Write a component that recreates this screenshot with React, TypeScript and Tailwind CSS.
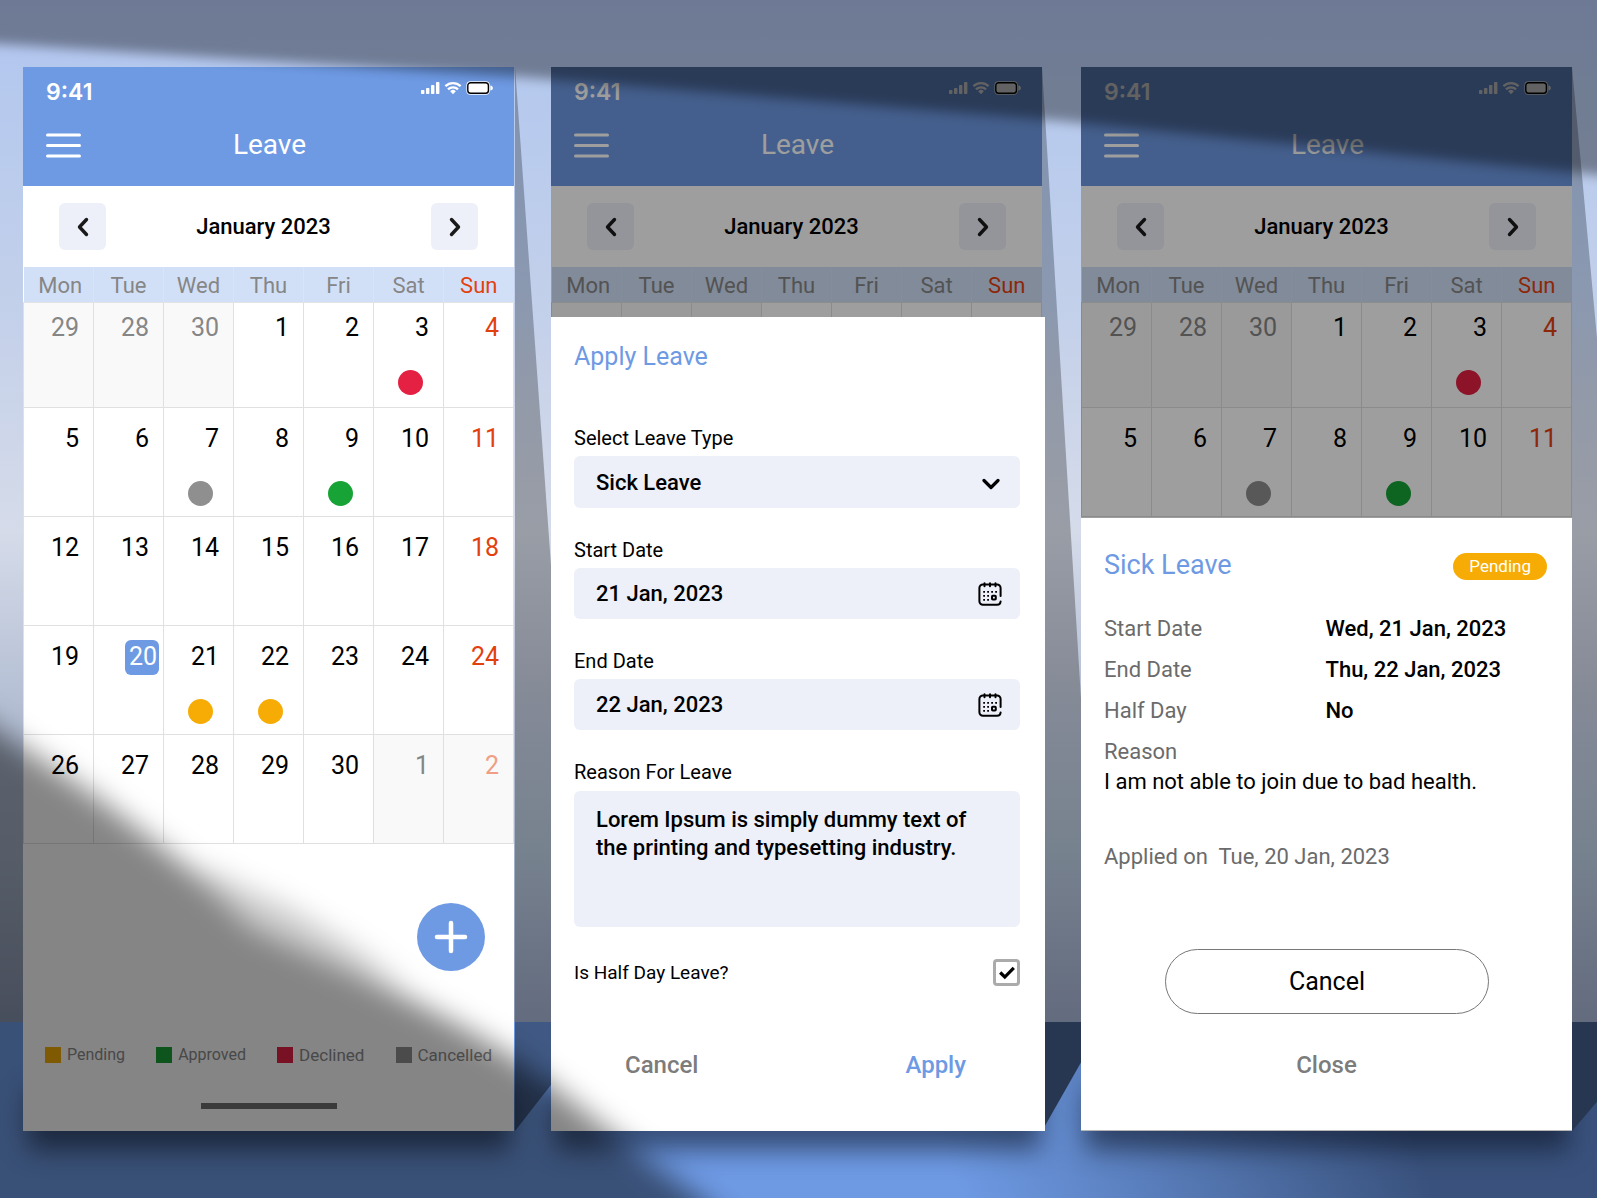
import React, { useState } from "react";

type Status = "pending" | "approved" | "declined" | "cancelled";
type Day = {
  n: number;
  tone?: "muted" | "sunday" | "sundayMuted" | "today";
  outside?: boolean;
  status?: Status;
};

const statusColor: Record<Status, string> = {
  pending: "bg-[#f6ac04]",
  approved: "bg-[#18a337]",
  declined: "bg-[#e42043]",
  cancelled: "bg-[#8f8f8f]",
};

const toneColor = {
  muted: "text-[#868686]",
  sunday: "text-[#e2410f]",
  sundayMuted: "text-[#ef9f86]",
  today: "text-white",
};

const weekdays = ["Mon", "Tue", "Wed", "Thu", "Fri", "Sat", "Sun"];

const weeks: Day[][] = [
  [
    { n: 29, tone: "muted", outside: true },
    { n: 28, tone: "muted", outside: true },
    { n: 30, tone: "muted", outside: true },
    { n: 1 },
    { n: 2 },
    { n: 3, status: "declined" },
    { n: 4, tone: "sunday" },
  ],
  [{ n: 5 }, { n: 6 }, { n: 7, status: "cancelled" }, { n: 8 }, { n: 9, status: "approved" }, { n: 10 }, { n: 11, tone: "sunday" }],
  [{ n: 12 }, { n: 13 }, { n: 14 }, { n: 15 }, { n: 16 }, { n: 17 }, { n: 18, tone: "sunday" }],
  [
    { n: 19 },
    { n: 20, tone: "today" },
    { n: 21, status: "pending" },
    { n: 22, status: "pending" },
    { n: 23 },
    { n: 24 },
    { n: 24, tone: "sunday" },
  ],
  [
    { n: 26 },
    { n: 27 },
    { n: 28 },
    { n: 29 },
    { n: 30 },
    { n: 1, tone: "muted", outside: true },
    { n: 2, tone: "sundayMuted", outside: true },
  ],
];

function StatusIcons() {
  return (
    <svg width="73" height="14" viewBox="0 0 73 14" fill="none" aria-hidden="true">
      <g fill="#fff">
        <rect x="0" y="9" width="3.4" height="4" rx="0.8" />
        <rect x="5" y="7" width="3.4" height="6" rx="0.8" />
        <rect x="10" y="4" width="3.4" height="9" rx="0.8" />
        <rect x="15" y="1" width="3.4" height="12" rx="0.8" />
        <path d="M32 13.2 29.2 10.2a4 4 0 0 1 5.6 0Z" />
      </g>
      <path d="M24.400 5.200a11 11 0 0 1 15.200 0M27 8.300a7.200 7.200 0 0 1 10 0" stroke="#fff" strokeWidth="2.300" />
      <rect x="45.400" y="0.300" width="23.400" height="13.400" rx="4" fill="#fff" />
      <rect x="46.800" y="1.700" width="20.600" height="10.600" rx="2.800" stroke="#000" strokeWidth="1.400" />
      <path d="M69.300 4.400c1.600.2 2.600 1.200 2.600 2.600s-1 2.400-2.600 2.600Z" fill="#fff" />
    </svg>
  );
}

function CalendarIcon() {
  return (
    <svg width="24" height="24" viewBox="0 0 24 24" fill="none" stroke="#000" strokeWidth="2" strokeLinecap="round" aria-hidden="true">
      <path d="M22.600 14V6a3.500 3.500 0 0 0-3.500-3.500H4.900A3.500 3.500 0 0 0 1.400 6v13.300a3.500 3.500 0 0 0 3.500 3.500h14.200a3.500 3.500 0 0 0 3.500-3.300" />
      <path d="M6.500 1.200v3M12 1.200v3M17.500 1.200v3" />
      <g fill="#000" stroke="none">
        <path d="M5.200 9h1.800v1.800H5.200zM9.200 9h1.800v1.800H9.200zM13.200 9h1.800v1.800h-1.800zM17.200 9h1.800v1.800h-1.800zM5.200 13h1.800v1.800H5.200zM9.200 13h1.800v1.800H9.200zM5.200 17h1.800v1.800H5.200zM9.200 17h1.800v1.800H9.200z" />
      </g>
      <rect x="14" y="13.800" width="3.800" height="3.800" rx="0.800" />
    </svg>
  );
}

function Chevron({ d }: { d: string }) {
  return (
    <svg width="24" height="24" viewBox="0 0 24 24" fill="none" stroke="#1a1a1a" strokeWidth="3.400" strokeLinecap="round" strokeLinejoin="round" aria-hidden="true">
      <path d={d} />
    </svg>
  );
}

function Screen({ rows, children }: { rows: number; children?: React.ReactNode }) {
  return (
    <div className="flex min-h-full flex-col bg-white">
      <header className="bg-[#6e9ae4] px-[23px] pt-[11px] pb-[22px] text-white">
        <div className="flex items-start justify-between">
          <span className="font-[Inter,sans-serif] text-[23px] leading-7 font-semibold">9:41</span>
          <span className="-mr-[3px] mt-[3px] block">
            <StatusIcons />
          </span>
        </div>
        <div className="mt-5 grid grid-cols-[1fr_auto_1fr] items-center">
          <button type="button" aria-label="Menu" className="justify-self-start">
            <svg width="35" height="25" viewBox="0 0 35 25" stroke="#fff" strokeWidth="3" strokeLinecap="round" aria-hidden="true">
              <path d="M1.500 2h32M1.500 12.500h32M1.500 23h32" />
            </svg>
          </button>
          <h1 className="pl-0.5 text-[28px] leading-[38px]">Leave</h1>
        </div>
      </header>

      <div className="flex h-[81px] items-center justify-between px-9">
        <button type="button" aria-label="Previous month" className="flex h-[47px] w-[47px] items-center justify-center rounded-md bg-[#edf0f8]">
          <Chevron d="M15.500 4.500 8.500 12l7 7.500" />
        </button>
        <h2 className="pr-2.5 text-[22px] leading-7 font-medium">January 2023</h2>
        <button type="button" aria-label="Next month" className="flex h-[47px] w-[47px] items-center justify-center rounded-md bg-[#edf0f8]">
          <Chevron d="M8.500 4.500 15.500 12l-7 7.500" />
        </button>
      </div>

      <table className="w-full table-fixed border-collapse">
        <thead>
          <tr className="h-[35px] bg-[#d2e0f7]">
            {weekdays.map((d) => (
              <th
                key={d}
                scope="col"
                className={`border-r border-b border-[#e3e3e3] px-0 pt-1 pb-0 text-center text-[22px] leading-6 font-normal first:pl-1 last:border-r-0 ${
                  d === "Sun" ? "text-[#e2410f]" : "text-[#868686]"
                }`}
              >
                {d}
              </th>
            ))}
          </tr>
        </thead>
        <tbody>
          {weeks.slice(0, rows).map((week, w) => (
            <tr key={w} className="h-[109px] first:h-[105px]">
              {week.map((day, i) => (
                <td
                  key={i}
                  className={`border border-[#e0e0e0] p-0 pr-3.5 text-right align-top text-[25px] ${day.outside ? "bg-[#f9f9f9]" : ""} ${
                    w === 0 ? "pt-[9px]" : "pt-[15px]"
                  }`}
                >
                  {day.tone === "today" ? (
                    <span className="-my-px -mr-2.5 ml-auto flex h-[35px] w-[34px] items-center justify-center rounded-md bg-[#6e9ae4] pl-0.5 leading-7 text-white">
                      {day.n}
                    </span>
                  ) : (
                    <span className={`block leading-8 ${day.tone ? toneColor[day.tone] : "text-black"}`}>{day.n}</span>
                  )}
                  {day.status && (
                    <span className="flex justify-end pt-[26px] pr-1.5">
                      <span role="img" aria-label={day.status} className={`h-[25px] w-[25px] rounded-full ${statusColor[day.status]}`} />
                    </span>
                  )}
                </td>
              ))}
            </tr>
          ))}
        </tbody>
      </table>
      {children}
    </div>
  );
}

function LegendItem({ status, label, size }: { status: Status; label: string; size: string }) {
  return (
    <li className="flex items-center gap-1.5">
      <span className={`h-4 w-4 ${statusColor[status]}`} />
      <span className={`leading-5 text-[#8a8a8a] ${size}`}>{label}</span>
    </li>
  );
}

function Phone({ className, rows, sheet, children }: { className?: string; rows: number; sheet?: React.ReactNode; children?: React.ReactNode }) {
  return (
    <section className={`grid min-h-[1064px] flex-1 basis-0 ${className ?? ""}`}>
      <div className="relative col-start-1 row-start-1 min-w-0">
        <Screen rows={rows}>{children}</Screen>
        {sheet && <div className="absolute inset-0 bg-black/38" />}
      </div>
      {sheet}
    </section>
  );
}

const fieldBox = "w-full rounded-md bg-[#edf0f8] pl-[22px] text-[22px] font-medium text-black outline-none";
const fieldLabel = "text-xl leading-6";

function DateField({ id, label, initial }: { id: string; label: string; initial: string }) {
  const [value, setValue] = useState(initial);
  return (
    <div className="flex flex-col gap-1.5">
      <label htmlFor={id} className={fieldLabel}>
        {label}
      </label>
      <div className="grid items-center">
        <input id={id} value={value} onChange={(e) => setValue(e.target.value)} className={`col-start-1 row-start-1 h-[51px] ${fieldBox}`} />
        <button type="button" aria-label={`Pick ${label}`} className="col-start-1 row-start-1 mr-[18px] justify-self-end">
          <CalendarIcon />
        </button>
      </div>
    </div>
  );
}

function ApplySheet() {
  const [half, setHalf] = useState(true);
  return (
    <form
      onSubmit={(e) => e.preventDefault()}
      className="relative col-start-1 row-start-1 mt-[250px] -mr-[3px] flex flex-col bg-white pt-[25px] pr-[25px] pb-[52px] pl-[23px]"
    >
      <h2 className="text-[25px] leading-[30px] text-[#6e9ae4]">Apply Leave</h2>
      <div className="mt-[54px] flex flex-col gap-[30px]">
        <div className="flex flex-col gap-1.5">
          <label htmlFor="leave-type" className={fieldLabel}>
            Select Leave Type
          </label>
          <div className="grid items-center">
            <select id="leave-type" className={`col-start-1 row-start-1 h-[52px] appearance-none ${fieldBox}`}>
              <option>Sick Leave</option>
            </select>
            <svg
              width="18"
              height="12"
              viewBox="0 0 18 12"
              fill="none"
              stroke="#000"
              strokeWidth="3.200"
              strokeLinecap="round"
              strokeLinejoin="round"
              aria-hidden="true"
              className="pointer-events-none col-start-1 row-start-1 mt-1 mr-5 justify-self-end"
            >
              <path d="M2 2.500 9 9.500l7-7" />
            </svg>
          </div>
        </div>
        <DateField id="start-date" label="Start Date" initial="21 Jan, 2023" />
        <DateField id="end-date" label="End Date" initial="22 Jan, 2023" />
        <div className="flex flex-col gap-[7px]">
          <label htmlFor="reason" className={fieldLabel}>
            Reason For Leave
          </label>
          <textarea
            id="reason"
            defaultValue="Lorem Ipsum is simply dummy text of the printing and typesetting industry."
            className="h-[136px] w-full resize-none rounded-md bg-[#edf0f8] px-[22px] pt-[15px] text-[22px] leading-7 font-medium outline-none"
          />
        </div>
      </div>
      <label className="mt-8 flex items-center justify-between text-[19px] leading-6">
        Is Half Day Leave?
        <span className="grid h-[27px] w-[27px] place-items-center">
          <input
            type="checkbox"
            checked={half}
            onChange={(e) => setHalf(e.target.checked)}
            className="col-start-1 row-start-1 h-[27px] w-[27px] appearance-none rounded-sm border-3 border-[#ababab] bg-white"
          />
          {half && (
            <svg width="16" height="14" viewBox="0 0 16 14" fill="none" stroke="#000" strokeWidth="3.200" aria-hidden="true" className="pointer-events-none col-start-1 row-start-1">
              <path d="M1.200 6.500 5.800 11 14.800 1.800" />
            </svg>
          )}
        </span>
      </label>
      <div className="mt-auto flex justify-between pr-[54px] pl-[51px] text-2xl leading-7 font-medium">
        <button type="button" className="text-[#7c7c7c]">
          Cancel
        </button>
        <button type="submit" className="text-[#6e9ae4]">
          Apply
        </button>
      </div>
    </form>
  );
}

const details = [
  ["Start Date", "Wed, 21 Jan, 2023"],
  ["End Date", "Thu, 22 Jan, 2023"],
  ["Half Day", "No"],
];

function DetailSheet() {
  return (
    <div className="relative col-start-1 row-start-1 mt-[451px] flex flex-col border-b border-[#b5b5b5] bg-white pt-[30px] pr-[25px] pb-[51px] pl-[23px]">
      <div className="flex items-center justify-between">
        <h2 className="text-[27px] leading-[34px] text-[#6e9ae4]">Sick Leave</h2>
        <span className="mt-0.5 rounded-full bg-[#f6ac04] px-4 text-[17px] leading-[27px] text-white">Pending</span>
      </div>
      <dl className="mt-[33px] grid grid-cols-2 gap-y-[13px] text-[22px] leading-7">
        {details.map(([k, v]) => (
          <React.Fragment key={k}>
            <dt className="text-[#6b6b6b]">{k}</dt>
            <dd className="font-medium">{v}</dd>
          </React.Fragment>
        ))}
        <div className="col-span-2">
          <dt className="text-[#6b6b6b]">Reason</dt>
          <dd className="pt-0.5">I am not able to join due to bad health.</dd>
        </div>
      </dl>
      <p className="mt-[47px] text-[22px] leading-7 whitespace-pre text-[#6b6b6b]">{"Applied on  Tue, 20 Jan, 2023"}</p>
      <button type="button" className="mt-auto mr-[58px] ml-[61px] h-[65px] rounded-full border border-[#777] text-[25px]">
        Cancel
      </button>
      <button type="button" className="mt-[37px] self-center pl-0.5 text-2xl leading-7 font-medium text-[#7c7c7c]">
        Close
      </button>
    </div>
  );
}

/* Wall, floor and the long shadows the phones cast on them. */
function Backdrop() {
  return (
    <svg className="absolute inset-0 h-full w-full" viewBox="0 0 1597 1198" preserveAspectRatio="none" aria-hidden="true">
      <defs>
        <linearGradient id="wall" x1="0" y1="0" x2="0" y2="1">
          <stop offset="0" stopColor="#b2c4f2" />
          <stop offset="0.080" stopColor="#b5c9ee" />
          <stop offset="0.300" stopColor="#c3d0ea" />
          <stop offset="0.520" stopColor="#d5dbe9" />
          <stop offset="0.700" stopColor="#b2bdd2" />
          <stop offset="0.850" stopColor="#a3b1c6" />
          <stop offset="1" stopColor="#8a96b0" />
        </linearGradient>
        <linearGradient id="cast" gradientUnits="userSpaceOnUse" x1="0" y1="0" x2="0" y2="1022">
          <stop offset="0" stopColor="#8090ae" />
          <stop offset="0.280" stopColor="#8a98b0" />
          <stop offset="0.400" stopColor="#939aa8" />
          <stop offset="0.520" stopColor="#999da6" />
          <stop offset="0.680" stopColor="#858a97" />
          <stop offset="0.830" stopColor="#77828f" />
          <stop offset="1" stopColor="#636b7e" />
        </linearGradient>
        <linearGradient id="fade" gradientUnits="userSpaceOnUse" x1="960" y1="1198" x2="1390" y2="1060">
          <stop offset="0" stopColor="#0c1424" stopOpacity="0" />
          <stop offset="0.350" stopColor="#0c1424" stopOpacity="0.180" />
          <stop offset="1" stopColor="#0c1424" stopOpacity="0.540" />
        </linearGradient>
        <filter id="contact" x="-10%" y="-80%" width="120%" height="260%" colorInterpolationFilters="sRGB">
          <feGaussianBlur stdDeviation="13" />
        </filter>
        <clipPath id="floor">
          <rect y="1022" width="1597" height="176" />
        </clipPath>
      </defs>
      <rect width="1597" height="1022" fill="url(#wall)" />
      <path d="M515 67 L584 1022 H515Z M1042 67 L1101 1022 H1042Z M1572 67 L1660 1022 H1572Z" fill="url(#cast)" />
      <rect y="1022" width="1597" height="176" fill="#6e9ae4" />
      <g clipPath="url(#floor)">
        <rect x="900" y="1022" width="697" height="176" fill="url(#fade)" />
        <g filter="url(#contact)" fill="#0a1020" fillOpacity="0.550">
          <rect x="28" y="1090" width="482" height="60" />
          <rect x="556" y="1090" width="484" height="60" />
          <rect x="1086" y="1090" width="482" height="60" />
        </g>
        <path d="M515 1022H600L515 1131Z" fill="#000" fillOpacity="0.420" />
        <path d="M1042 1022H1104L1042 1131Z M1572 1022H1665L1572 1131Z" fill="#283751" />
      </g>
    </svg>
  );
}

/* Soft ambient shade that falls across the whole scene. */
function Shade() {
  return (
    <svg className="pointer-events-none absolute inset-0 h-full w-full" viewBox="0 0 1597 1198" preserveAspectRatio="none" aria-hidden="true">
      <defs>
        <filter id="soft" x="-10%" y="-30%" width="120%" height="160%">
          <feGaussianBlur stdDeviation="6" />
        </filter>
        <filter id="softer" x="-10%" y="-10%" width="120%" height="120%">
          <feGaussianBlur stdDeviation="14" />
        </filter>
      </defs>
      <path d="M-60 -60H1680V183L1597 175 1060 121 520 77 0 44 -60 40Z" fill="#000" fillOpacity="0.380" filter="url(#soft)" />
      <g filter="url(#softer)" fill="#000">
        <path d="M-60 690 0 732 95 796 160 846 205 882 250 928 300 951 357 974 411 1000 464 1028 515 1058 560 1092 620 1140 700 1198 760 1250 800 1300H-100Z" fillOpacity="0.480" />
        <path d="M195 865 290 908 350 945 411 988 300 952 250 930Z" fillOpacity="0.200" />
      </g>
    </svg>
  );
}

export default function App() {
  return (
    <main className="relative min-h-screen overflow-hidden font-[Roboto,sans-serif] text-black">
      <Backdrop />
      <div className="relative flex min-h-screen items-start pt-[67px] pr-[25px] pb-[67px] pl-[23px]">
        <Phone rows={5}>
          <div className="flex flex-1 flex-col pt-[59px] pb-[22px]">
            <button type="button" aria-label="Apply for leave" className="mr-[29px] flex h-[68px] w-[68px] items-center justify-center self-end rounded-full bg-[#6e9ae4]">
              <svg width="34" height="34" viewBox="0 0 34 34" stroke="#fff" strokeWidth="4.500" strokeLinecap="round" aria-hidden="true">
                <path d="M17 3v28M3 17h28" />
              </svg>
            </button>
            <ul className="mt-auto flex items-center justify-between px-[22px]">
              <LegendItem status="pending" label="Pending" size="text-base" />
              <LegendItem status="approved" label="Approved" size="text-base" />
              <LegendItem status="declined" label="Declined" size="text-[17px]" />
              <LegendItem status="cancelled" label="Cancelled" size="text-[17px]" />
            </ul>
            <div className="mt-[38px] h-1.5 w-[136px] self-center bg-[#707070]" />
          </div>
        </Phone>
        <Phone className="ml-[37px]" rows={1} sheet={<ApplySheet />} />
        <Phone className="ml-[39px]" rows={2} sheet={<DetailSheet />} />
      </div>
      <Shade />
    </main>
  );
}
